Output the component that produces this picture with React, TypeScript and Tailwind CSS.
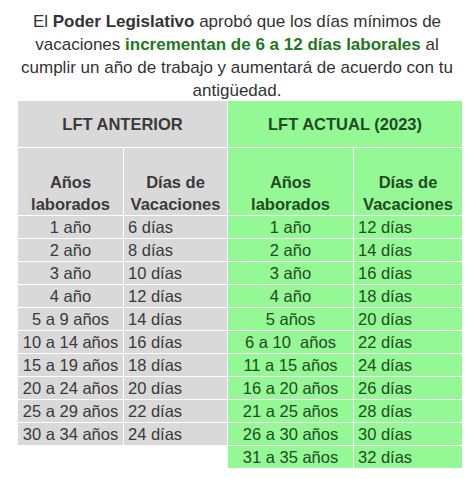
const rows: [string, string, string, string][] = [
  ["1 año", "6 días", "1 año", "12 días"],
  ["2 año", "8 días", "2 año", "14 días"],
  ["3 año", "10 días", "3 año", "16 días"],
  ["4 año", "12 días", "4 año", "18 días"],
  ["5 a 9 años", "14 días", "5 años", "20 días"],
  ["10 a 14 años", "16 días", "6 a 10\u00a0 años", "22 días"],
  ["15 a 19 años", "18 días", "11 a 15 años", "24 días"],
  ["20 a 24 años", "20 días", "16 a 20 años", "26 días"],
  ["25 a 29 años", "22 días", "21 a 25 años", "28 días"],
  ["30 a 34 años", "24 días", "26 a 30 años", "30 días"],
  ["", "", "31 a 35 años", "32 días"],
];

const gray = "bg-[#d9d9d9] text-[#3a3a3a]";
const green = "bg-[#94f894] text-[#234a26]";
const cell = "border border-white p-0 h-[23px] leading-[22px]";

export default function App() {
  return (
    <div className="min-h-screen bg-white pt-[10px] font-['Liberation_Sans',Arial,sans-serif] text-[16.5px]">
      <p className="mx-auto w-[470px] text-center text-[17px] leading-[23px] text-[#333]">
        El <b>Poder Legislativo</b> aprobó que los días mínimos de
        <br />
        vacaciones{" "}
        <b className="text-[#1c7a1c]">incrementan de 6 a 12 días laborales</b>{" "}
        al
        <br />
        cumplir un año de trabajo y aumentará de acuerdo con tu
        <br />
        antigüedad.
      </p>

      <table className="ml-[17px] mt-[-2px] w-[445px] table-fixed border-collapse">
        <colgroup>
          <col className="w-[106px]" />
          <col className="w-[104px]" />
          <col className="w-[126px]" />
          <col className="w-[109px]" />
        </colgroup>
        <thead>
          <tr>
            <th colSpan={2} className={`${gray} border border-white h-[47px] p-0 font-bold`}>
              LFT ANTERIOR
            </th>
            <th colSpan={2} className={`${green} border border-white h-[47px] p-0 font-bold`}>
              LFT ACTUAL (2023)
            </th>
          </tr>
          <tr>
            <th className={`${gray} border border-white h-[68px] p-0 align-bottom font-bold leading-[22px]`}>
              Años
              <br />
              laborados
            </th>
            <th className={`${gray} border border-white h-[68px] p-0 align-bottom font-bold leading-[22px]`}>
              Días de
              <br />
              Vacaciones
            </th>
            <th className={`${green} border border-white h-[68px] p-0 align-bottom font-bold leading-[22px]`}>
              Años
              <br />
              laborados
            </th>
            <th className={`${green} border border-white h-[68px] p-0 align-bottom font-bold leading-[22px]`}>
              Días de
              <br />
              Vacaciones
            </th>
          </tr>
        </thead>
        <tbody>
          {rows.map((r, i) => {
            const empty = r[0] === "";
            return (
              <tr key={i}>
                <td className={`${cell} text-center whitespace-pre ${empty ? "" : gray}`}>{r[0]}</td>
                <td className={`${cell} pl-1 ${empty ? "" : gray}`}>{r[1]}</td>
                <td className={`${cell} text-center whitespace-nowrap ${green}`}>{r[2]}</td>
                <td className={`${cell} pl-1 ${green}`}>{r[3]}</td>
              </tr>
            );
          })}
        </tbody>
      </table>
    </div>
  );
}
